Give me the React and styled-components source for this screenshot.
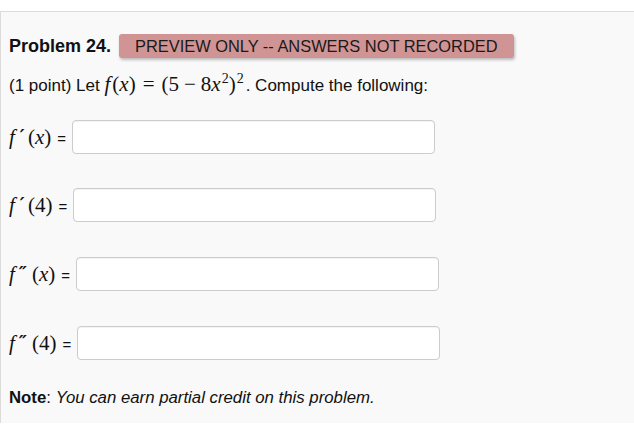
import React from "react";
import styled, { createGlobalStyle } from "styled-components";

const Global = createGlobalStyle`
  html, body { margin: 0; padding: 0; background: #ffffff; }
  body { font-family: "Liberation Sans", Arial, Helvetica, sans-serif; color: #111; }
`;

const Panel = styled.div`
  margin-top: 11px;
  border-top: 1px solid #dcdcdc;
  border-left: 1px solid #dcdcdc;
  background: #f9f9f9;
  min-height: calc(100vh - 12px);
  box-sizing: border-box;
  padding: 22px 8px 0 8px;
`;

const Header = styled.div`
  display: flex;
  align-items: center;
  gap: 8px;
  height: 24px;
`;

const Title = styled.span`
  font-weight: bold;
  font-size: 18px;
`;

const Badge = styled.span`
  display: inline-flex;
  align-items: center;
  height: 24px;
  padding: 0 16px;
  background: #d09494;
  border-radius: 3px;
  box-shadow: 1px 2px 3px rgba(0, 0, 0, 0.25);
  font-size: 16.4px;
  color: #1a1a1a;
`;

const Intro = styled.p`
  margin: 16px 0 0 0;
  font-size: 17px;
  line-height: 20px;
  height: 20px;
  display: flex;
  align-items: baseline;
  white-space: pre;
`;

const Math = styled.span`
  font-family: "Liberation Serif", "Times New Roman", serif;
  font-size: 21px;
  white-space: pre;
  margin: ${(p) => p.$m || "0"};
`;

const It = styled.i`
  font-style: italic;
  margin-right: ${(p) => p.$mr || 0}px;
`;

const Op = styled.span`
  margin: 0 ${(p) => p.$sp}px;
`;

const Sup = styled.sup`
  font-size: 14px;
  vertical-align: 8px;
  line-height: 0;
  margin-left: 1px;
`;

const Row = styled.div`
  display: flex;
  align-items: center;
  margin-top: ${(p) => p.$mt}px;
  height: 34px;
`;

const Label = styled.span`
  display: inline-flex;
  align-items: baseline;
  white-space: pre;
  margin-right: 6px;
`;

const FGlyph = styled.i`
  display: inline-block;
  font-style: italic;
  width: ${(p) => p.$w}px;
`;

const Prime = styled.span`
  display: inline-block;
  font-family: "DejaVu Serif", "Liberation Serif", serif;
  font-weight: bold;
  font-size: 18px;
  transform: translateY(-2px) skewX(-10deg);
  width: ${(p) => p.$w}px;
`;

const Eq = styled.span`
  font-size: 15px;
  margin-left: 6px;
`;

const Input = styled.input`
  width: 363px;
  height: 34px;
  box-sizing: border-box;
  border: 1px solid #cccccc;
  border-radius: 4px;
  background: #ffffff;
  box-shadow: inset 0 1px 1px rgba(0, 0, 0, 0.05);
  outline: none;
  padding: 0 8px;
  font-size: 14px;
`;

const Note = styled.p`
  margin: 28px 0 0 0;
  font-size: 16.8px;
  line-height: 20px;
`;

const Bold = styled.b`
  font-weight: bold;
`;

const Em = styled.em`
  font-style: italic;
`;

function DerivLabel({ primes, arg }) {
  const double = primes === "″";
  return (
    <Label>
      <Math>
        <FGlyph $w={double ? 9 : 10}>f</FGlyph>
        <Prime $w={double ? 14 : 9}>{primes}</Prime>({arg === "x" ? <It>x</It> : arg})
      </Math>
      <Eq>=</Eq>
    </Label>
  );
}

const rows = [
  { primes: "′", arg: "x", mt: 26 },
  { primes: "′", arg: "4", mt: 34 },
  { primes: "″", arg: "x", mt: 35 },
  { primes: "″", arg: "4", mt: 35 },
];

export default function App() {
  return (
    <>
      <Global />
      <Panel>
        <Header>
          <Title>Problem 24.</Title>
          <Badge>PREVIEW ONLY -- ANSWERS NOT RECORDED</Badge>
        </Header>
        <Intro>
          (1 point) Let{" "}
          <Math $m="0 2px 0 0">
            <It $mr={2}>f</It>(<It>x</It>)<Op $sp={7}>=</Op>(5<Op $sp={5}>−</Op>8<It>x</It>
            <Sup>2</Sup>)<Sup>2</Sup>
          </Math>
          . Compute the following:
        </Intro>
        {rows.map((r, i) => (
          <Row key={i} $mt={r.mt}>
            <DerivLabel primes={r.primes} arg={r.arg} />
            <Input type="text" />
          </Row>
        ))}
        <Note>
          <Bold>Note</Bold>: <Em>You can earn partial credit on this problem.</Em>
        </Note>
      </Panel>
    </>
  );
}
